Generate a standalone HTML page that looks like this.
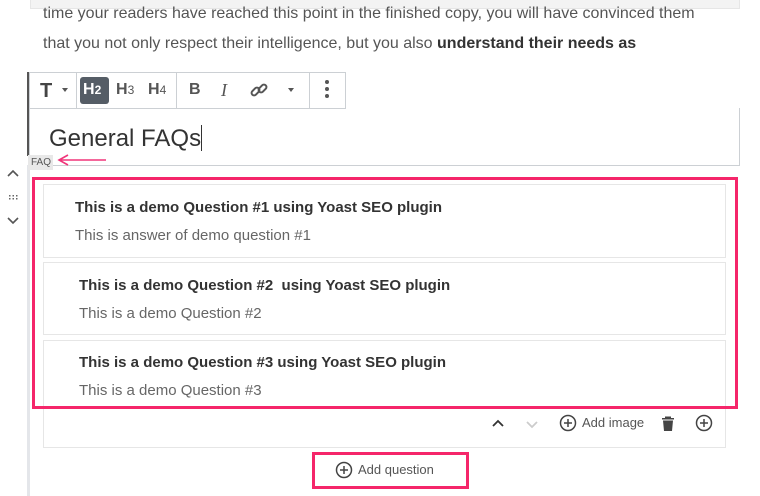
<!DOCTYPE html>
<html><head><meta charset="utf-8"><style>
*{margin:0;padding:0;box-sizing:border-box}
body{width:760px;height:496px;background:#fff;position:relative;overflow:hidden;font-family:"Liberation Sans",sans-serif;color:#555}
.a{position:absolute}
.t{font-size:16px;color:#555;white-space:nowrap}
.q{font-size:15px;font-weight:bold;color:#333;white-space:nowrap}
.r{font-size:15px;color:#666;white-space:nowrap}
.item{position:absolute;border:1px solid #e6e6e6;left:43px;width:683px}
</style></head><body>
<div class="a" style="left:30px;top:0;width:710px;height:9px;background:#f3f3f3;border:1px solid #e6e6e6;border-top:none"></div>
<div class="a t" style="left:43px;top:5px">time your readers have reached this point in the finished copy, you will have convinced them</div>
<div class="a t" style="left:43px;top:35px">that you not only respect their intelligence, but you also <b style="color:#333">understand their needs as</b></div>
<div class="a" style="left:27px;top:72px;width:3px;height:84px;background:#555"></div>
<div class="a" style="left:27px;top:165px;width:3px;height:331px;background:#e4e6ea"></div>
<div class="a" style="left:29px;top:72px;width:317px;height:37px;border:1px solid #ccd0d4;background:#fff"></div>
<div class="a" style="left:76px;top:73px;width:1px;height:35px;background:#ccd0d4"></div>
<div class="a" style="left:176px;top:73px;width:1px;height:35px;background:#ccd0d4"></div>
<div class="a" style="left:309px;top:73px;width:1px;height:35px;background:#ccd0d4"></div>
<div class="a" style="left:40px;top:80px;font-size:20px;font-weight:bold;color:#444">T</div>
<div class="a" style="left:62px;top:88px;border:3px solid transparent;border-top:4px solid #555"></div>
<div class="a" style="left:80px;top:77px;width:29px;height:27px;background:#555d66;border-radius:3px;color:#fff;font-weight:bold;font-size:16px;padding:4px 0 0 3px">H<span style="font-size:12px">2</span></div>
<div class="a" style="left:116px;top:81px;font-weight:bold;font-size:16px;color:#555">H<span style="font-size:12px;font-weight:normal">3</span></div>
<div class="a" style="left:148px;top:81px;font-weight:bold;font-size:16px;color:#555">H<span style="font-size:12px;font-weight:normal">4</span></div>
<div class="a" style="left:189px;top:81px;font-weight:bold;font-size:16px;color:#555">B</div>
<div class="a" style="left:221px;top:80px;font-style:italic;font-size:18px;font-family:'Liberation Serif',serif;color:#555">I</div>
<svg class="a" style="left:249px;top:80px" width="20" height="20" viewBox="0 0 20 20"><g fill="none" stroke="#555" stroke-width="2"><rect x="2" y="9" width="9" height="5" rx="2.5" transform="rotate(-45 6.5 11.5)"/><rect x="9" y="6" width="9" height="5" rx="2.5" transform="rotate(-45 13.5 8.5)"/></g></svg>
<div class="a" style="left:288px;top:88px;border:3px solid transparent;border-top:4px solid #555"></div>
<div class="a" style="left:325px;top:80px;width:4px;height:4px;border-radius:2px;background:#555;box-shadow:0 7px 0 #555,0 14px 0 #555"></div>
<div class="a" style="left:29px;top:108px;width:711px;height:58px;border:1px solid #ccd0d4;border-top:none"></div>
<div class="a" style="left:49px;top:125px;font-size:24px;color:#333">General FAQs<span style="display:inline-block;width:1px;height:26px;background:#333;vertical-align:-5px"></span></div>
<div class="a" style="left:28px;top:155px;width:25px;height:15px;background:#e8e8e8;font-size:10px;color:#555;padding:2px 0 0 3px">FAQ</div>
<svg class="a" style="left:56px;top:154px" width="52" height="12"><path d="M50 6 L4 6 M12 1 L3 6 L12 11" stroke="#f0357a" stroke-width="1.6" fill="none"/></svg>
<svg class="a" style="left:6px;top:167px" width="14" height="60"><g fill="none" stroke="#555" stroke-width="1.6"><path d="M2 9 L7 4 L12 9"/><path d="M2 51 L7 56 L12 51"/></g><g fill="#666"><rect x="3" y="28" width="1.5" height="1.5"/><rect x="6.5" y="28" width="1.5" height="1.5"/><rect x="10" y="28" width="1.5" height="1.5"/><rect x="3" y="31" width="1.5" height="1.5"/><rect x="6.5" y="31" width="1.5" height="1.5"/><rect x="10" y="31" width="1.5" height="1.5"/></g></svg>
<div class="item" style="top:184px;height:74px"></div>
<div class="item" style="top:262px;height:73px"></div>
<div class="item" style="top:340px;height:108px"></div>
<div class="a q" style="left:75px;top:199px">This is a demo Question #1 using Yoast SEO plugin</div>
<div class="a r" style="left:75px;top:227px">This is answer of demo question #1</div>
<div class="a q" style="left:79px;top:277px">This is a demo Question #2&nbsp; using Yoast SEO plugin</div>
<div class="a r" style="left:79px;top:305px">This is a demo Question #2</div>
<div class="a q" style="left:79px;top:354px">This is a demo Question #3 using Yoast SEO plugin</div>
<div class="a r" style="left:79px;top:382px">This is a demo Question #3</div>
<div class="a" style="left:32px;top:177px;width:706px;height:232px;border:3px solid #f5266a"></div>
<svg class="a" style="left:490px;top:414px" width="230" height="20"><g fill="none" stroke-width="1.8"><path d="M3 12 L8 7 L13 12" stroke="#333"/><path d="M37 8 L42 13 L47 8" stroke="#ccc"/><circle cx="78" cy="9" r="7.5" stroke="#444" stroke-width="1.5"/><path d="M78 5 V13 M74 9 H82" stroke="#444" stroke-width="1.5"/><circle cx="214" cy="9" r="7.5" stroke="#444" stroke-width="1.5"/><path d="M214 5 V13 M210 9 H218" stroke="#444" stroke-width="1.5"/></g><path d="M172 4 H184 V5.5 H172Z M175 2.5 H181 V4 H175Z M173 6.5 H183 L182 17 H174Z" fill="#444"/></svg>
<div class="a" style="left:582px;top:415px;font-size:13px;color:#555">Add image</div>
<div class="a" style="left:312px;top:452px;width:157px;height:37px;border:3px solid #f5266a"></div>
<svg class="a" style="left:335px;top:461px" width="18" height="18"><circle cx="9" cy="9" r="7.5" stroke="#444" stroke-width="1.5" fill="none"/><path d="M9 5 V13 M5 9 H13" stroke="#444" stroke-width="1.5"/></svg>
<div class="a" style="left:358px;top:462px;font-size:13px;color:#555">Add question</div>
</body></html>
